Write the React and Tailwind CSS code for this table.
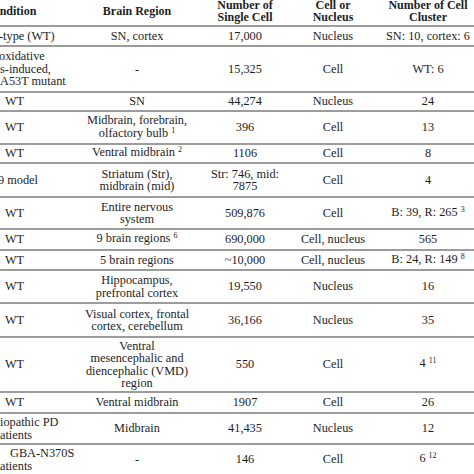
import React from "react";

const Sup = ({ children }) => (
    <span className="relative -top-[4px] ml-[3px] text-[8px]">{children}</span>
);

const rows = [
    {
        h: "h-[20px]",
        c1: [["-type (WT)", "-ml-[1px]"]],
        c2: "SN, cortex",
        c3: "17,000",
        c4: "Nucleus",
        c5: "SN: 10, cortex: 6",
    },
    {
        h: "h-[46px]",
        c1: [
            ["oxidative", "-ml-[1px]"],
            ["s-induced,", "ml-0"],
            ["A53T mutant", "ml-0"],
        ],
        c2: "-",
        c3: "15,325",
        c4: "Cell",
        c5: "WT: 6",
    },
    { h: "h-[19px]", c1: [["WT", "ml-[5px]"]], c2: "SN", c3: "44,274", c4: "Nucleus", c5: "24" },
    {
        h: "h-[33px]",
        c1: [["WT", "ml-[5px]"]],
        c2: (
            <>
                Midbrain, forebrain,
                <br />
                olfactory bulb<Sup>1</Sup>
            </>
        ),
        c3: "396",
        c4: "Cell",
        c5: "13",
    },
    {
        h: "h-[19px]",
        c1: [["WT", "ml-[5px]"]],
        c2: (
            <>
                Ventral midbrain<Sup>2</Sup>
            </>
        ),
        c3: "1106",
        c4: "Cell",
        c5: "8",
    },
    {
        h: "h-[34px]",
        c1: [["9 model", "-ml-[2px]"]],
        c2: (
            <>
                Striatum (Str),
                <br />
                midbrain (mid)
            </>
        ),
        c3: (
            <>
                Str: 746, mid:
                <br />
                7875
            </>
        ),
        c4: "Cell",
        c5: "4",
    },
    {
        h: "h-[32px]",
        c1: [["WT", "ml-[5px]"]],
        c2: (
            <>
                Entire nervous
                <br />
                system
            </>
        ),
        c3: "509,876",
        c4: "Cell",
        c5: (
            <>
                B: 39, R: 265<Sup>3</Sup>
            </>
        ),
    },
    {
        h: "h-[21px]",
        c1: [["WT", "ml-[5px]"]],
        c2: (
            <>
                9 brain regions<Sup>6</Sup>
            </>
        ),
        c3: "690,000",
        c4: "Cell, nucleus",
        c5: "565",
    },
    {
        h: "h-[20px]",
        c1: [["WT", "ml-[5px]"]],
        c2: "5 brain regions",
        c3: "~10,000",
        c4: "Cell, nucleus",
        c5: (
            <>
                B: 24, R: 149<Sup>8</Sup>
            </>
        ),
    },
    {
        h: "h-[33px]",
        c1: [["WT", "ml-[5px]"]],
        c2: (
            <>
                Hippocampus,
                <br />
                prefrontal cortex
            </>
        ),
        c3: "19,550",
        c4: "Nucleus",
        c5: "16",
    },
    {
        h: "h-[34px]",
        c1: [["WT", "ml-[5px]"]],
        c2: (
            <>
                Visual cortex, frontal
                <br />
                cortex, cerebellum
            </>
        ),
        c3: "36,166",
        c4: "Nucleus",
        c5: "35",
    },
    {
        h: "h-[55px]",
        c1: [["WT", "ml-[5px]"]],
        c2: (
            <>
                Ventral
                <br />
                mesencephalic and
                <br />
                diencephalic (VMD)
                <br />
                region
            </>
        ),
        c3: "550",
        c4: "Cell",
        c5: (
            <>
                4<Sup>11</Sup>
            </>
        ),
    },
    { h: "h-[21px]", c1: [["WT", "ml-[5px]"]], c2: "Ventral midbrain", c3: "1907", c4: "Cell", c5: "26" },
    {
        h: "h-[31px]",
        c1: [
            ["iopathic PD", "ml-0"],
            ["atients", "ml-0"],
        ],
        c2: "Midbrain",
        c3: "41,435",
        c4: "Nucleus",
        c5: "12",
    },
    {
        h: "h-[31px]",
        c1: [
            ["GBA-N370S", "ml-[10px]"],
            ["atients", "ml-0"],
        ],
        c2: "-",
        c3: "146",
        c4: "Cell",
        c5: (
            <>
                6<Sup>12</Sup>
            </>
        ),
    },
];

const Row = ({ row }) => (
    <div
        className={`grid grid-cols-[78px_118px_98px_78px_112px] w-[484px] border-b-2 border-[#9c9c9c] ${row.h}`}
    >
        <div className="flex flex-col justify-center items-start overflow-hidden whitespace-nowrap">
            {row.c1.map(([t, m]) => (
                <span key={t} className={m}>
                    {t}
                </span>
            ))}
        </div>
        <div className="flex items-center justify-center text-center">
            <div>{row.c2}</div>
        </div>
        <div className="flex items-center justify-center text-center">
            <div>{row.c3}</div>
        </div>
        <div className="flex items-center justify-center text-center">
            <div>{row.c4}</div>
        </div>
        <div className="flex items-center justify-center text-center">
            <div>{row.c5}</div>
        </div>
    </div>
);

export default function App() {
    return (
        <div className="w-[474px] h-[474px] overflow-hidden bg-white text-[#1e1e1e] [font-family:'Liberation_Serif',serif] text-[12.3px] leading-[12.5px]">
            <div className="grid grid-cols-[78px_118px_98px_78px_112px] w-[484px] h-[27px] pb-[3px] border-b-2 border-[#9c9c9c] font-bold text-[12px] leading-[11.5px]">
                <div className="flex items-center overflow-hidden whitespace-nowrap">
                    <span className="-ml-[15px]">Condition</span>
                </div>
                <div className="flex items-center justify-center text-center">Brain Region</div>
                <div className="flex items-center justify-center text-center">
                    <div>
                        Number of
                        <br />
                        Single Cell
                    </div>
                </div>
                <div className="flex items-center justify-center text-center">
                    <div>
                        Cell or
                        <br />
                        Nucleus
                    </div>
                </div>
                <div className="flex items-center justify-center text-center">
                    <div>
                        Number of Cell
                        <br />
                        Cluster
                    </div>
                </div>
            </div>
            {rows.map((row, i) => (
                <Row key={i} row={row} />
            ))}
        </div>
    );
}
